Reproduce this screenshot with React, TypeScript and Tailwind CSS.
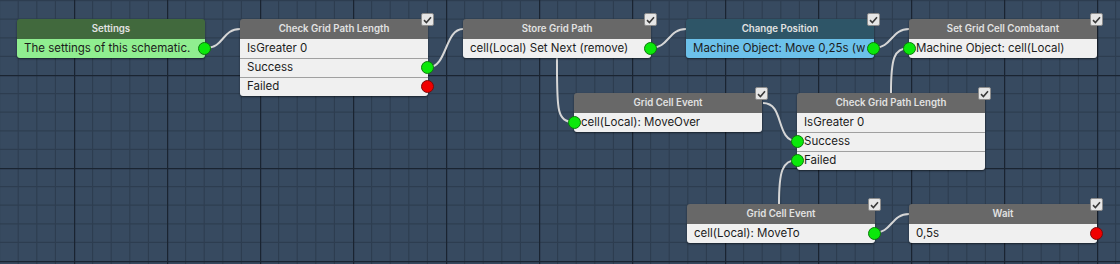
import React from "react";

type PinColor = "green" | "red";
type Row = { text: string; left?: PinColor; right?: PinColor };
type NodeDef = {
  pos: string;
  title: string;
  variant?: "grey" | "green" | "blue";
  rows: Row[];
  check: boolean;
};

const nodes: NodeDef[] = [
  { pos: "left-[17px] top-[19px]", title: "Settings", variant: "green", rows: [{ text: "The settings of this schematic.", right: "green" }], check: false },
  { pos: "left-[240px] top-[19px]", title: "Check Grid Path Length", rows: [{ text: "IsGreater 0" }, { text: "Success", right: "green" }, { text: "Failed", right: "red" }], check: true },
  { pos: "left-[463px] top-[19px]", title: "Store Grid Path", rows: [{ text: "cell(Local) Set Next (remove)", right: "green" }], check: true },
  { pos: "left-[686px] top-[19px]", title: "Change Position", variant: "blue", rows: [{ text: "Machine Object: Move 0,25s (wait)", right: "green" }], check: true },
  { pos: "left-[909px] top-[19px]", title: "Set Grid Cell Combatant", rows: [{ text: "Machine Object: cell(Local)", left: "green" }], check: true },
  { pos: "left-[574px] top-[93px]", title: "Grid Cell Event", rows: [{ text: "cell(Local): MoveOver", left: "green" }], check: true },
  { pos: "left-[797px] top-[93px]", title: "Check Grid Path Length", rows: [{ text: "IsGreater 0" }, { text: "Success", left: "green" }, { text: "Failed", left: "green" }], check: true },
  { pos: "left-[687px] top-[204px]", title: "Grid Cell Event", rows: [{ text: "cell(Local): MoveTo", right: "green" }], check: true },
  { pos: "left-[909px] top-[204px]", title: "Wait", rows: [{ text: "0,5s", right: "red" }], check: true },
];

function Pin({ color, side }: { color: PinColor; side: "left" | "right" }) {
  const c = color === "green" ? "bg-[#0be80b] border-[#0a7a0a]" : "bg-[#f00000] border-[#7a0a0a]";
  const s = side === "left" ? "left-[-6px]" : "right-[-6px]";
  return <div className={`absolute top-[3px] ${s} w-[13px] h-[13px] rounded-full border ${c}`} />;
}

function Check() {
  return (
    <div className="absolute right-[-6px] top-[-6px] w-[13px] h-[13px] bg-[#e6e6e6] border border-[#8c8c8c] rounded-[2px] flex items-center justify-center z-10">
      <svg width="9" height="8" viewBox="0 0 9 8">
        <path d="M1 4.2 L3.4 6.5 L8 1.3" fill="none" stroke="#3a3a3a" strokeWidth="1.6" />
      </svg>
    </div>
  );
}

function Node({ n }: { n: NodeDef }) {
  const head = n.variant === "green" ? "bg-[#41693d]" : n.variant === "blue" ? "bg-[#2e5567]" : "bg-[#686868]";
  const body = n.variant === "green" ? "bg-[#90ee90]" : n.variant === "blue" ? "bg-[#6cc1ea]" : "bg-[#f0f0f0]";
  return (
    <div className={`absolute ${n.pos} w-[188px]`}>
      <div className="flex flex-col rounded-[3px] overflow-hidden shadow-[0_1px_2px_rgba(0,0,0,0.55)]">
        <div className={`h-[20px] ${head} flex items-center justify-center text-[9.7px] font-semibold text-[#e2e2e2]`}>{n.title}</div>
        {n.rows.map((r, i) => (
          <div key={i} className={`h-[19px] ${body} ${i > 0 ? "border-t border-[#a0a0a0]" : ""} flex items-center pl-[7px] pr-[9px] whitespace-nowrap text-[11.5px] text-[#1c1c1c]`}>
            <span className="min-w-0 overflow-hidden">{r.text}</span>
          </div>
        ))}
      </div>
      <div className="absolute left-0 right-0 top-[20px] flex flex-col">
        {n.rows.map((r, i) => (
          <div key={i} className="relative h-[19px]">
            {r.left && <Pin color={r.left} side="left" />}
            {r.right && <Pin color={r.right} side="right" />}
          </div>
        ))}
      </div>
      {n.check && <Check />}
    </div>
  );
}

export default function App() {
  const wires = [
    "M206 48 C224 48, 222 29, 240 29",
    "M429 67 C447 67, 445 29, 463 29",
    "M651 48 C669 48, 668 29, 686 29",
    "M874 48 C892 48, 891 29, 909 29",
    "M909 48 C894 48, 891 58, 891 93",
    "M557 58 C557 108, 556 122, 574 122",
    "M763 103 C785 103, 775 141, 797 141",
    "M797 160 C782 160, 779 172, 779 204",
    "M874 233 C892 233, 891 214, 909 214",
  ];
  return (
    <div className="relative w-[1120px] h-[264px] overflow-hidden bg-[#374a60] font-['Inter','Noto_Sans',sans-serif]">
      <svg className="absolute inset-0" width="1120" height="264">
        <defs>
          <pattern id="g" x="74" y="75" width="93" height="93" patternUnits="userSpaceOnUse">
            <g stroke="#2d3d50" strokeWidth="1.2">
              <line x1="18.6" y1="0" x2="18.6" y2="93" />
              <line x1="37.2" y1="0" x2="37.2" y2="93" />
              <line x1="55.8" y1="0" x2="55.8" y2="93" />
              <line x1="74.4" y1="0" x2="74.4" y2="93" />
              <line x1="0" y1="18.6" x2="93" y2="18.6" />
              <line x1="0" y1="37.2" x2="93" y2="37.2" />
              <line x1="0" y1="55.8" x2="93" y2="55.8" />
              <line x1="0" y1="74.4" x2="93" y2="74.4" />
            </g>
            <g stroke="#1a2431" strokeWidth="1.5">
              <line x1="0.5" y1="0" x2="0.5" y2="93" />
              <line x1="0" y1="0.5" x2="93" y2="0.5" />
            </g>
          </pattern>
        </defs>
        <rect width="1120" height="264" fill="url(#g)" />
        <g fill="none" stroke="#d6d6d6" strokeWidth="2">
          {wires.map((d, i) => (
            <path key={i} d={d} />
          ))}
        </g>
      </svg>
      {nodes.map((n, i) => (
        <Node key={i} n={n} />
      ))}
    </div>
  );
}
